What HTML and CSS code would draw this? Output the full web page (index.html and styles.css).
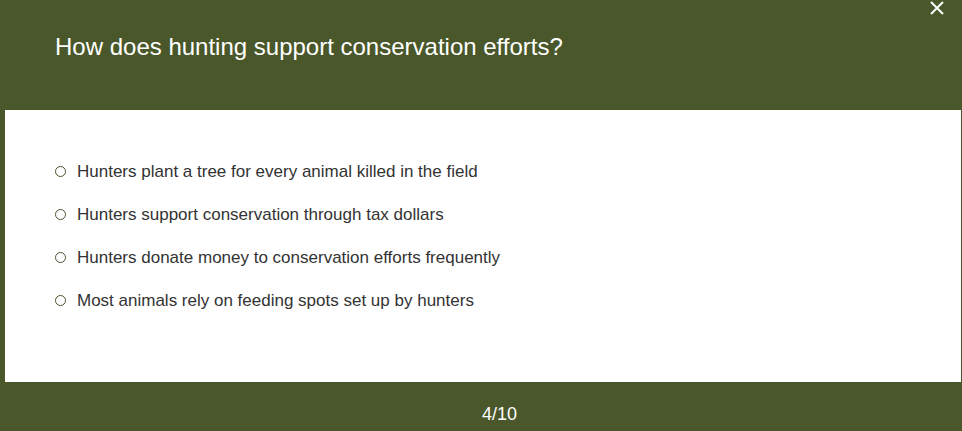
FILE: index.html
```html
<!DOCTYPE html>
<html lang="en">
<head>
    <meta charset="UTF-8">
    <title>Quiz</title>
    <link rel="stylesheet" href="styles.css">
</head>
<body>
    <div class="quiz">
        <div class="quiz-head">
            <h2>How does hunting support conservation efforts?</h2>
            <span class="close">
                <svg width="14" height="14" viewBox="0 0 14 14"><path d="M1 1L13 13M13 1L1 13" stroke="#fff" stroke-width="2"/></svg>
            </span>
        </div>
        <div class="quiz-body">
            <ul class="answers">
                <li><span class="radio"></span>Hunters plant a tree for every animal killed in the field</li>
                <li><span class="radio"></span>Hunters support conservation through tax dollars</li>
                <li><span class="radio"></span>Hunters donate money to conservation efforts frequently</li>
                <li><span class="radio"></span>Most animals rely on feeding spots set up by hunters</li>
            </ul>
        </div>
        <div class="quiz-foot">4/10</div>
    </div>
</body>
</html>
```

FILE: styles.css
```css
*{ box-sizing: border-box;}
body{
    margin:0;
    background:#49572a;
    font-family:"Liberation Sans", Arial, sans-serif;
}
.quiz{
    width:962px;
    height:431px;
    display:flex;
    flex-direction:column;
}
.quiz-head{
    position:relative;
    height:110px;
    padding:33px 0 0 55px;
}
.quiz-head h2{
    margin:0;
    color:#fff;
    font-size:24px;
    font-weight:normal;
}
.close{
    position:absolute;
    top:1px;
    right:18px;
    line-height:0;
}
.quiz-body{
    height:272px;
    margin:0 1px 0 5px;
    background:#fff;
    padding-top:40px;
}
.answers{
    list-style:none;
    margin:0;
    padding:0 0 0 50px;
}
.answers li{
    display:flex;
    align-items:center;
    height:43px;
    font-size:17px;
    color:#333;
}
.radio{
    width:11px;
    height:11px;
    border:1px solid #4b5530;
    border-radius:50%;
    margin-right:11px;
}
.quiz-foot{
    flex:1;
    display:flex;
    align-items:center;
    justify-content:center;
    padding:15px 0 0 37px;
    color:#fff;
    font-size:18px;
}
```
